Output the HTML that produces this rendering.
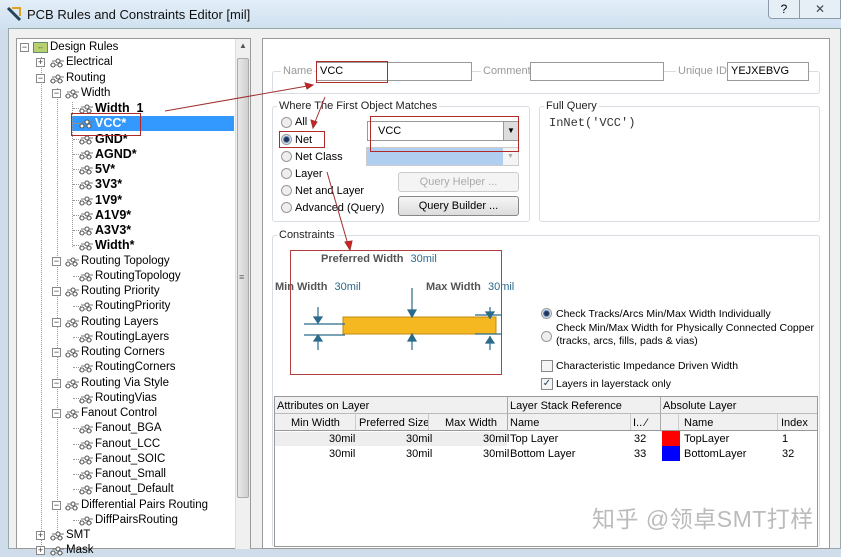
<!DOCTYPE html>
<html><head><meta charset="utf-8"><style>
*{margin:0;padding:0;box-sizing:border-box}
body{width:841px;height:549px;overflow:hidden;position:relative;background:#cfdcea;font-family:"Liberation Sans",Arial,sans-serif;font-size:11px;color:#000}
.a{position:absolute;white-space:nowrap}
.t{position:absolute;white-space:nowrap;font-size:11px;line-height:14px}
.b{font-weight:bold}
.box{position:absolute;width:9px;height:9px;border:1px solid #888;background:#fff;font-size:9px;line-height:7px;text-align:center;color:#333}
.fs{position:absolute;border:1px solid #d8dde3;border-radius:3px}
.lg{position:absolute;background:#fff;padding:0 2px;font-size:11px;line-height:12px;color:#222}
.inp{position:absolute;border:1px solid #999;background:#fff;height:19px;font-size:11px;line-height:17px;padding-left:3px}
.rad{position:absolute;width:11px;height:11px;border:1px solid #999;border-radius:50%;background:#eee}
.btn{position:absolute;border:1px solid #888;border-radius:3px;background:linear-gradient(#f6f6f6,#dcdcdc);text-align:center;line-height:18px;height:20px}
.red{position:absolute;border:1.5px solid #b02a2a}
.sm{font-size:10.5px}
</style></head><body>
<div class="a" style="left:0;top:0;width:841px;height:30px;background:linear-gradient(#e3eef8,#cfe0ef)"></div>
<svg class="a" style="left:6px;top:6px" width="16" height="16"><path d="M2 2 L14 14" stroke="#245" stroke-width="3"/><path d="M6 2 L14 2 L14 10" stroke="#e0a020" stroke-width="2" fill="none"/></svg>
<div class="a" style="left:27px;top:7px;font-size:13px;color:#111">PCB Rules and Constraints Editor [mil]</div>
<div class="a" style="left:768px;top:0;width:32px;height:19px;border:1px solid #8a9aab;border-top:none;border-radius:0 0 0 4px;background:#e6eef6;text-align:center;font-size:12px;line-height:18px">?</div>
<div class="a" style="left:799px;top:0;width:42px;height:19px;border:1px solid #8a9aab;border-top:none;background:#e6eef6;text-align:center;font-size:12px;line-height:18px;color:#445">✕</div>
<div class="a" style="left:8px;top:28px;width:833px;height:521px;background:#f0f0f0;border:1px solid #9aa"></div>
<div class="a" style="left:16px;top:38px;width:235px;height:511px;background:#fff;border:1px solid #999"></div>
<div class="a" style="left:235px;top:39px;width:15px;height:510px;background:#f0f0f0;border-left:1px solid #ddd"></div>
<div class="a" style="left:237px;top:58px;width:12px;height:440px;background:linear-gradient(90deg,#e8e8e8,#d0d0d0);border:1px solid #aaa;border-radius:2px"></div>
<div class="a" style="left:239px;top:41px;font-size:8px;color:#555">▲</div>
<div class="a" style="left:239px;top:272px;font-size:9px;color:#666">≡</div>
<div class="a" style="left:72px;top:116px;width:162px;height:15px;background:#3399ff"></div>
<div class="a" style="left:41px;top:57px;height:492px;border-left:1px dotted #999"></div>
<div class="a" style="left:57px;top:88px;height:448px;border-left:1px dotted #999"></div>
<div class="a" style="left:72px;top:102px;height:145px;border-left:1px dotted #999"></div>
<div id="tree"></div>
<script>
var rows=[
[0,'Design Rules',0,1],[1,'Electrical',0,2],[1,'Routing',0,1],[2,'Width',0,1],
[3,'Width_1',1],[3,'VCC*',1,0,1],[3,'GND*',1],[3,'AGND*',1],[3,'5V*',1],[3,'3V3*',1],[3,'1V9*',1],[3,'A1V9*',1],[3,'A3V3*',1],[3,'Width*',1],
[2,'Routing Topology',0,1],[3,'RoutingTopology'],[2,'Routing Priority',0,1],[3,'RoutingPriority'],[2,'Routing Layers',0,1],[3,'RoutingLayers'],
[2,'Routing Corners',0,1],[3,'RoutingCorners'],[2,'Routing Via Style',0,1],[3,'RoutingVias'],[2,'Fanout Control',0,1],
[3,'Fanout_BGA'],[3,'Fanout_LCC'],[3,'Fanout_SOIC'],[3,'Fanout_Small'],[3,'Fanout_Default'],[2,'Differential Pairs Routing',0,1],[3,'DiffPairsRouting'],[1,'SMT',0,2],[1,'Mask',0,2]];
var h='';
var bx=[20,36,52,0],tx=[50,66,81,95];
rows.forEach(function(r,i){var y=40+i*15.25;var l=r[0];
if(r[3]){h+='<div class="box" style="left:'+bx[l]+'px;top:'+(y+3)+'px">'+(r[3]==1?'−':'+')+'</div>';}
if(l==3)h+='<div class="a" style="left:73px;top:'+(y+7)+'px;width:8px;border-top:1px dotted #999"></div>';
var ix=tx[l]-17;
if(l==0)h+='<div class="a" style="left:33px;top:'+(y+2)+'px;width:15px;height:11px;background:#b8d070;border:1px solid #687;font-size:7px;line-height:9px;color:#363;text-align:center">↔</div>';
else h+='<svg class="a" style="left:'+ix+'px;top:'+(y+2)+'px" width="16" height="11"><path d="M1 8 H14 M3 4 H15" stroke="#777" stroke-width="1"/><circle cx="4" cy="8" r="2" fill="#fff" stroke="#555"/><circle cx="11" cy="8" r="2" fill="#fff" stroke="#555"/><circle cx="9" cy="4" r="2" fill="#fff" stroke="#555"/></svg>';
h+='<div class="t'+(r[2]?' b':'')+'" style="left:'+tx[l]+'px;top:'+y+'px;font-size:'+(r[2]?12.5:11.5)+'px;'+(r[4]?'color:#fff':'')+'">'+r[1]+'</div>';});
document.getElementById('tree').outerHTML=h;
</script>
<div class="a" style="left:262px;top:38px;width:568px;height:511px;background:#fff;border:1px solid #999"></div>
<div class="fs" style="left:272px;top:71px;width:548px;height:23px"></div>
<div class="lg" style="left:281px;top:65px;color:#999">Name</div>
<div class="inp" style="left:316px;top:62px;width:156px">VCC</div>
<div class="lg" style="left:481px;top:65px;color:#999">Comment</div>
<div class="inp" style="left:530px;top:62px;width:134px"></div>
<div class="lg" style="left:676px;top:65px;color:#999">Unique ID</div>
<div class="inp" style="left:727px;top:62px;width:82px">YEJXEBVG</div>

<div class="fs" style="left:272px;top:106px;width:258px;height:116px"></div>
<div class="lg" style="left:277px;top:100px">Where The First Object Matches</div>
<div class="rad" style="left:281px;top:117px"></div><div class="t" style="left:295px;top:115px">All</div>
<div class="rad" style="left:281px;top:134px;background:radial-gradient(#235 0 2px,#5b8fc8 3px,#eee 4px)"></div><div class="t" style="left:295px;top:133px">Net</div>
<div class="rad" style="left:281px;top:151px"></div><div class="t" style="left:295px;top:150px">Net Class</div>
<div class="rad" style="left:281px;top:168px"></div><div class="t" style="left:295px;top:167px">Layer</div>
<div class="rad" style="left:281px;top:185px"></div><div class="t" style="left:295px;top:184px">Net and Layer</div>
<div class="rad" style="left:281px;top:202px"></div><div class="t" style="left:295px;top:201px">Advanced (Query)</div>
<div class="inp" style="left:367px;top:121px;width:152px;height:20px;line-height:18px;padding-left:10px">VCC</div>
<div class="a" style="left:503px;top:122px;width:15px;height:18px;background:#ddd;border-left:1px solid #999;font-size:8px;text-align:center;line-height:18px">▼</div>
<div class="a" style="left:366px;top:147px;width:153px;height:19px;background:#b0cef0;border:1px solid #ccc"></div>
<div class="a" style="left:503px;top:148px;width:15px;height:17px;background:#f4f4f4;font-size:7px;color:#aaa;text-align:center;line-height:17px">▼</div>
<div class="btn" style="left:398px;top:172px;width:121px;color:#aaa;border-color:#ccc;background:#f4f4f4">Query Helper ...</div>
<div class="btn" style="left:398px;top:196px;width:121px">Query Builder ...</div>

<div class="fs" style="left:539px;top:106px;width:281px;height:116px"></div>
<div class="lg" style="left:544px;top:100px">Full Query</div>
<div class="a" style="left:549px;top:116px;font-family:'Liberation Mono',monospace;font-size:12px;color:#333">InNet('VCC')</div>

<div class="fs" style="left:272px;top:235px;width:548px;height:312px"></div>
<div class="lg" style="left:277px;top:229px">Constraints</div>
<div class="a" style="left:290px;top:250px;width:212px;height:125px;border:1px solid #b04040;background:#fff"></div>
<div class="a b" style="left:321px;top:253px;color:#555;font-size:11px">Preferred Width <span style="color:#2a6a8a;font-weight:normal;margin-left:4px">30mil</span></div>
<div class="a b" style="left:275px;top:281px;color:#555;font-size:11px">Min Width <span style="color:#2a6a8a;font-weight:normal;margin-left:4px">30mil</span></div>
<div class="a b" style="left:426px;top:281px;color:#555;font-size:11px">Max Width <span style="color:#2a6a8a;font-weight:normal;margin-left:4px">30mil</span></div>
<svg class="a" style="left:290px;top:250px" width="212" height="125">
<rect x="53" y="67" width="153" height="17" fill="#f5b820" stroke="#c08a10"/>
<g stroke="#2a6a8a" stroke-width="1.2" fill="#2a6a8a">
<path d="M14 74 H55 M14 85 H55 M185 65 H222 M185 84 H222" fill="none"/>
<path d="M28 57 V72 M28 86 V100 M122 38 V67 M122 84 V100 M200 57 V69 M200 86 V100" fill="none"/>
<path d="M24 67 L28 73 L32 67Z M24 91 L28 85 L32 91Z M118 60 L122 67 L126 60Z M118 91 L122 84 L126 91Z M196 62 L200 68 L204 62Z M196 93 L200 87 L204 93Z"/>
</g></svg>
<div class="rad" style="left:541px;top:308px;background:radial-gradient(#235 0 2px,#5b8fc8 3px,#eee 4px)"></div>
<div class="t sm" style="left:556px;top:307px">Check Tracks/Arcs Min/Max Width Individually</div>
<div class="rad" style="left:541px;top:331px"></div>
<div class="t sm" style="left:556px;top:322px;line-height:13px">Check Min/Max Width for Physically Connected Copper<br>(tracks, arcs, fills, pads &amp; vias)</div>
<div class="a" style="left:541px;top:360px;width:12px;height:12px;border:1px solid #888;background:#f4f4f4"></div>
<div class="t sm" style="left:556px;top:359px">Characteristic Impedance Driven Width</div>
<div class="a" style="left:541px;top:378px;width:12px;height:12px;border:1px solid #888;background:#f4f4f4;font-size:10px;line-height:10px;text-align:center;color:#245">✓</div>
<div class="t sm" style="left:556px;top:377px">Layers in layerstack only</div>
<div class="a" style="left:274px;top:396px;width:544px;height:151px;border:1px solid #999;background:#fff"></div>
<div class="a" style="left:275px;top:397px;width:542px;height:34px;background:#f0f0f0;border-bottom:1px solid #999"></div>
<div class="a" style="left:275px;top:413px;width:542px;border-top:1px solid #bbb"></div>
<div class="a" style="left:507px;top:397px;height:34px;border-left:1px solid #aaa"></div>
<div class="a" style="left:660px;top:397px;height:34px;border-left:1px solid #aaa"></div>
<div class="t" style="left:277px;top:399px">Attributes on Layer</div>
<div class="t" style="left:510px;top:399px">Layer Stack Reference</div>
<div class="t" style="left:663px;top:399px">Absolute Layer</div>
<div class="t" style="left:291px;top:416px">Min Width</div>
<div class="t" style="left:359px;top:416px">Preferred Size</div>
<div class="t" style="left:445px;top:416px">Max Width</div>
<div class="t" style="left:510px;top:416px">Name</div>
<div class="t" style="left:633px;top:416px">I.. ⁄</div>
<div class="t" style="left:684px;top:416px">Name</div>
<div class="t" style="left:781px;top:416px">Index</div>
<div class="a" style="left:355px;top:414px;height:16px;border-left:1px solid #ccc"></div>
<div class="a" style="left:428px;top:414px;height:16px;border-left:1px solid #ccc"></div>
<div class="a" style="left:630px;top:414px;height:16px;border-left:1px solid #ccc"></div>
<div class="a" style="left:678px;top:414px;height:16px;border-left:1px solid #ccc"></div>
<div class="a" style="left:777px;top:414px;height:16px;border-left:1px solid #ccc"></div>
<div class="a" style="left:275px;top:432px;width:232px;height:14px;background:#eee"></div>
<div class="t" style="left:329px;top:432px">30mil</div><div class="t" style="left:406px;top:432px">30mil</div><div class="t" style="left:483px;top:432px">30mil</div><div class="t" style="left:510px;top:432px">Top Layer</div><div class="t" style="left:634px;top:432px">32</div>
<div class="a" style="left:662px;top:431px;width:18px;height:15px;background:#f00"></div><div class="t" style="left:684px;top:432px">TopLayer</div><div class="t" style="left:782px;top:432px">1</div>
<div class="t" style="left:329px;top:447px">30mil</div><div class="t" style="left:406px;top:447px">30mil</div><div class="t" style="left:483px;top:447px">30mil</div><div class="t" style="left:510px;top:447px">Bottom Layer</div><div class="t" style="left:634px;top:447px">33</div>
<div class="a" style="left:662px;top:446px;width:18px;height:15px;background:#00f"></div><div class="t" style="left:684px;top:447px">BottomLayer</div><div class="t" style="left:782px;top:447px">32</div>
<div class="a" style="left:592px;top:500px;font-family:'Liberation Sans','Noto Sans CJK SC',sans-serif;font-size:23px;letter-spacing:0.5px;color:rgba(170,170,170,0.8)">知乎 @领卓SMT打样</div>
<div class="red" style="left:71px;top:113px;width:70px;height:23px"></div>
<div class="red" style="left:316px;top:61px;width:72px;height:22px"></div>
<div class="red" style="left:279px;top:131px;width:46px;height:17px"></div>
<div class="red" style="left:370px;top:116px;width:149px;height:36px"></div>
<svg class="a" style="left:0;top:0" width="841" height="549">
<g stroke="#a03030" stroke-width="1" fill="#d02020">
<path d="M165 111 L313 85" fill="none"/><path d="M313 85 L305 83 L307 89Z"/>
<path d="M325 97 L313 127" fill="none"/><path d="M313 128 L311 120 L317 122Z"/>
<path d="M327 172 L349 248" fill="none"/><path d="M350 250 L345 242 L352 241Z"/>
</g></svg>
</body></html>
